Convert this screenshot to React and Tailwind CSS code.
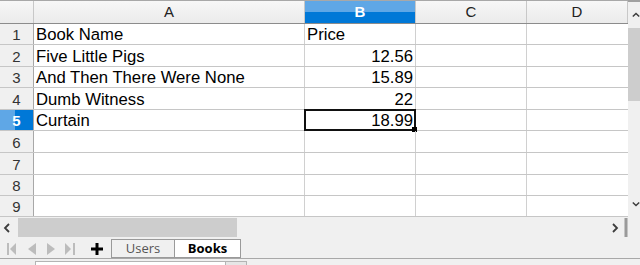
import React from 'react';

const cols = [
  { key: 'A', w: 'w-[271px]' },
  { key: 'B', w: 'w-[111px]' },
  { key: 'C', w: 'w-[111px]' },
  { key: 'D', w: 'w-[101px]' },
];

// row heights incl. bottom grid line
const rows = [
  { n: 1, h: 'h-[21px]', a: 'Book Name', b: 'Price', left: true },
  { n: 2, h: 'h-[22px]', a: 'Five Little Pigs', b: '12.56' },
  { n: 3, h: 'h-[21px]', a: 'And Then There Were None', b: '15.89' },
  { n: 4, h: 'h-[22px]', a: 'Dumb Witness', b: '22' },
  { n: 5, h: 'h-[21px]', a: 'Curtain', b: '18.99', active: true },
  { n: 6, h: 'h-[22px]' },
  { n: 7, h: 'h-[22px]' },
  { n: 8, h: 'h-[21px]' },
  { n: 9, h: 'h-[21px]' },
];

function Chevron({ dir, className }) {
  const pts = {
    up: '1,6 5,2 9,6',
    down: '1,2 5,6 9,2',
    left: '6,1 2,5 6,9',
    right: '2,1 6,5 2,9',
  }[dir];
  const vb = dir === 'up' || dir === 'down' ? '0 0 10 8' : '0 0 8 10';
  return (
    <svg viewBox={vb} className={className}>
      <polyline points={pts} fill="none" stroke="#3c3c3c" strokeWidth="1.8" />
    </svg>
  );
}

function NavButtons() {
  return (
    <div className="flex items-center h-full pt-[1px]">
      <svg viewBox="0 0 10 12" className="w-[10px] h-[12px] ml-[7px]">
        <rect x="0" y="0" width="2" height="12" fill="#bcbcbc" />
        <polygon points="9,0 3,6 9,12" fill="#bcbcbc" />
      </svg>
      <svg viewBox="0 0 8 12" className="w-[8px] h-[12px] ml-[11px]">
        <polygon points="8,0 0,6 8,12" fill="#bcbcbc" />
      </svg>
      <svg viewBox="0 0 8 12" className="w-[8px] h-[12px] ml-[11px]">
        <polygon points="0,0 8,6 0,12" fill="#bcbcbc" />
      </svg>
      <svg viewBox="0 0 10 12" className="w-[10px] h-[12px] ml-[10px]">
        <polygon points="0,0 6,6 0,12" fill="#bcbcbc" />
        <rect x="8" y="0" width="2" height="12" fill="#bcbcbc" />
      </svg>
      <svg viewBox="0 0 12 12" className="w-[12px] h-[12px] ml-[16px]">
        <path d="M4.5 0h3v4.5H12v3H7.5V12h-3V7.5H0v-3h4.5z" fill="#000" />
      </svg>
    </div>
  );
}

export default function App() {
  return (
    <div className="w-[640px] h-[265px] overflow-hidden bg-white flex flex-col font-['Liberation_Sans',Arial,sans-serif]">
      {/* Grid + vertical scrollbar */}
      <div className="flex h-[217px]">
        <div className="w-[628px] flex flex-col border-t border-[#a8a8a8]">
          {/* Column headers */}
          <div className="flex h-[23px] border-b border-[#8c8c8c] text-[15px] text-[#222]">
            <div className="w-[34px] border-r border-[#c8c8c8] bg-linear-to-b from-[#f7f7f7] to-[#ebebeb]" />
            {cols.map((c) =>
              c.key === 'B' ? (
                <div
                  key={c.key}
                  className={`${c.w} flex items-center justify-center pt-[1px] border-r border-[#c8c8c8] bg-[linear-gradient(to_bottom,#5fa7e6_50%,#0078d7_50%)] text-white font-bold`}
                >
                  {c.key}
                </div>
              ) : (
                <div
                  key={c.key}
                  className={`${c.w} flex items-center justify-center pt-[1px] border-r border-[#c8c8c8] bg-linear-to-b from-[#f7f7f7] to-[#ebebeb]`}
                >
                  {c.key}
                </div>
              )
            )}
          </div>

          {/* Rows */}
          {rows.map((r) => (
            <div key={r.n} className={`flex ${r.h} border-b border-[#c6c6c6]`}>
              <div
                className={`w-[34px] flex items-center justify-center pt-[3px] border-r border-[#a8a8a8] text-[15px] ${
                  r.active
                    ? 'bg-[linear-gradient(to_right,#5fa7e6_44%,#0078d7_44%)] text-white font-bold'
                    : 'bg-[#f0f0f0] text-[#333]'
                }`}
              >
                {r.n}
              </div>
              <div className="w-[271px] flex items-center pt-[2px] px-[2px] border-r border-[#d0d0d0] text-[16.7px] text-black whitespace-nowrap">
                {r.a}
              </div>
              <div
                className={`relative w-[111px] flex items-center pt-[2px] px-[2px] border-r border-[#d0d0d0] text-[16.7px] text-black whitespace-nowrap ${
                  r.left ? 'justify-start' : 'justify-end'
                }`}
              >
                {r.b}
                {r.active && (
                  <div className="absolute -left-px -top-px -right-px -bottom-px border-2 border-[#111]">
                    <div className="absolute -right-[3px] -bottom-[3px] w-[5px] h-[5px] bg-black" />
                  </div>
                )}
              </div>
              <div className="w-[111px] border-r border-[#d0d0d0]" />
              <div className="w-[101px]" />
            </div>
          ))}
        </div>

        {/* Vertical scrollbar */}
        <div className="w-[12px] flex flex-col bg-[#f0f0f0]">
          <div className="h-[2px] bg-[#a0a0a0]" />
          <div className="h-[26px] flex items-center justify-center pl-[4px]">
            <Chevron dir="up" className="w-[10px] h-[8px]" />
          </div>
          <div className="h-[73px] bg-[#cdcdcd]" />
          <div className="flex-1 flex items-end justify-center pl-[4px] pb-[9px]">
            <Chevron dir="down" className="w-[10px] h-[8px]" />
          </div>
        </div>
      </div>

      {/* Horizontal scrollbar */}
      <div className="h-[21px] flex items-stretch bg-[#f0f0f0]">
        <div className="w-[18px] flex items-center pl-[3px]">
          <Chevron dir="left" className="w-[8px] h-[10px]" />
        </div>
        <div className="w-[219px] my-[1px] bg-[#cdcdcd]" />
        <div className="flex-1 flex items-center justify-end pr-[2px]">
          <Chevron dir="right" className="w-[8px] h-[10px]" />
        </div>
        <div className="w-[4px] my-[1px] mr-[12px] ml-[3px] bg-[#9a9a9a] border-x border-[#c4c4c4]" />
      </div>

      {/* Sheet tabs */}
      <div className="h-[21px] flex bg-[#f0f0f0] border-b border-[#a8a8a8] font-['Open_Sans',sans-serif] text-[13px]">
        <div className="w-[111px]">
          <NavButtons />
        </div>
        <div className="w-[64px] mt-[1px] flex items-center justify-center border border-[#9a9a9a] text-[#555]">
          Users
        </div>
        <div className="w-[66px] mt-[1px] flex items-center justify-center border border-l-0 border-[#9a9a9a] bg-white font-bold text-black">
          Books
        </div>
      </div>

      {/* Status area */}
      <div className="flex-1 flex bg-[#f0f0f0] pt-[2px]">
        <div className="ml-[35px] w-[212px] flex bg-white border-t border-x border-[#b4b4b4]">
          <div className="flex-1" />
          <div className="w-[21px] border-l border-[#b4b4b4] bg-[#e6e6e6]" />
        </div>
      </div>
    </div>
  );
}
